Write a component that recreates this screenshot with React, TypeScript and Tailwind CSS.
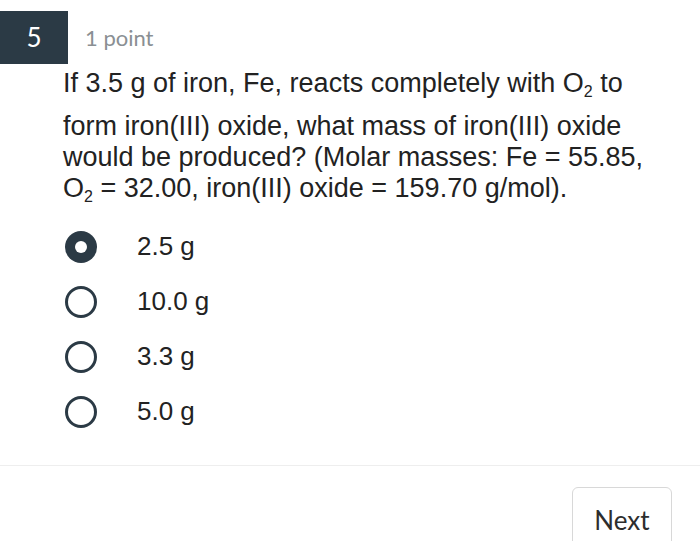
import React from 'react';

const options = ['2.5 g', '10.0 g', '3.3 g', '5.0 g'];

const Radio = ({ checked }: { checked: boolean }) =>
    checked ? (
        <span className="flex items-center justify-center w-[32px] h-[32px] rounded-full bg-[#2b3a45]">
            <span className="w-[12px] h-[12px] rounded-full bg-white" />
        </span>
    ) : (
        <span className="block w-[32px] h-[32px] rounded-full border-[3px] border-[#2b3a45] bg-white" />
    );

const App = () => {
    return (
        <div className="w-[700px] h-[541px] bg-white overflow-hidden relative" style={{ fontFamily: "'Liberation Sans', Arial, sans-serif" }}>
            <div className="flex items-center pt-[11px]">
                <div className="w-[68px] h-[53px] bg-[#2b3a45] text-white flex items-center justify-center text-[26px]" style={{ fontFamily: "Lato, sans-serif" }}>
                    5
                </div>
                <div className="ml-[17px] text-[22px] text-[#8a8f93]" style={{ fontFamily: "Lato, sans-serif" }}>
                    1 point
                </div>
            </div>

            <div className="pl-[63px] pt-[4px] text-[27px] text-[#222]">
                <div className="leading-[31px] mb-[12px] whitespace-nowrap">
                    If 3.5 g of iron, Fe, reacts completely with O<sub className="text-[16px] align-baseline relative top-[5px]">2</sub> to
                </div>
                <div className="leading-[31px] whitespace-nowrap">form iron(III) oxide, what mass of iron(III) oxide</div>
                <div className="leading-[31px] whitespace-nowrap">would be produced? (Molar masses: Fe = 55.85,</div>
                <div className="leading-[31px] whitespace-nowrap">
                    O<sub className="text-[16px] align-baseline relative top-[5px]">2</sub> = 32.00, iron(III) oxide = 159.70 g/mol).
                </div>
            </div>

            <div className="mt-[15px] flex flex-col">
                {options.map((opt, i) => (
                    <div key={opt} className="flex items-center h-[55px] pl-[65px]">
                        <Radio checked={i === 0} />
                        <span className="ml-[40px] text-[26px] text-[#222]">{opt}</span>
                    </div>
                ))}
            </div>

            <div className="absolute left-0 right-0 top-[465px] border-t border-[#eeeeee]" />

            <div className="absolute top-[487px] right-[28px]">
                <button className="w-[100px] h-[70px] border border-[#d8d8d8] rounded-[6px] bg-white text-[26px] text-[#2d2d2d] pb-[3px]" style={{ fontFamily: "Lato, sans-serif" }}>
                    Next
                </button>
            </div>
        </div>
    );
};

export default App;
